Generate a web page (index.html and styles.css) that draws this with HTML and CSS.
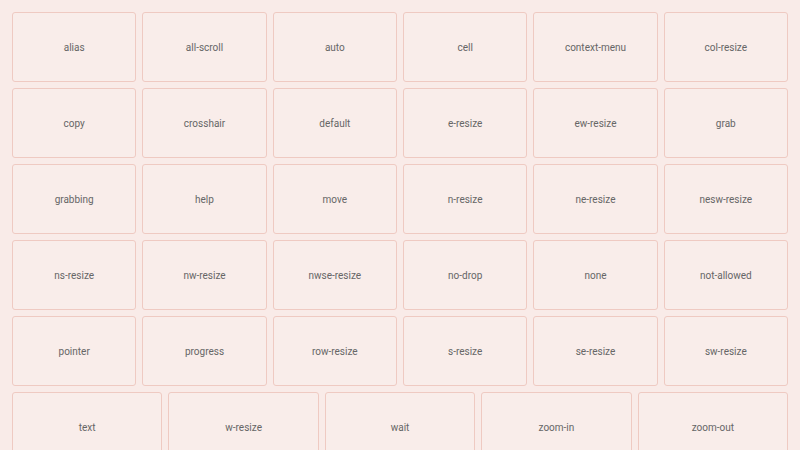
FILE: index.html
```html
<!DOCTYPE html>
<html>
<head>
<meta charset="utf-8">
<link rel="stylesheet" href="styles.css">
</head>
<body>
<div class="grid">
  <div class="cell">alias</div>
  <div class="cell">all-scroll</div>
  <div class="cell">auto</div>
  <div class="cell">cell</div>
  <div class="cell">context-menu</div>
  <div class="cell">col-resize</div>
  <div class="cell">copy</div>
  <div class="cell">crosshair</div>
  <div class="cell">default</div>
  <div class="cell">e-resize</div>
  <div class="cell">ew-resize</div>
  <div class="cell">grab</div>
  <div class="cell">grabbing</div>
  <div class="cell">help</div>
  <div class="cell">move</div>
  <div class="cell">n-resize</div>
  <div class="cell">ne-resize</div>
  <div class="cell">nesw-resize</div>
  <div class="cell">ns-resize</div>
  <div class="cell">nw-resize</div>
  <div class="cell">nwse-resize</div>
  <div class="cell">no-drop</div>
  <div class="cell">none</div>
  <div class="cell">not-allowed</div>
  <div class="cell">pointer</div>
  <div class="cell">progress</div>
  <div class="cell">row-resize</div>
  <div class="cell">s-resize</div>
  <div class="cell">se-resize</div>
  <div class="cell">sw-resize</div>
  <div class="cell">text</div>
  <div class="cell">w-resize</div>
  <div class="cell">wait</div>
  <div class="cell">zoom-in</div>
  <div class="cell">zoom-out</div>
</div>
</body>
</html>
```
FILE: styles.css
```css
html, body {
  margin: 0;
  padding: 0;
  background: #f9ebe8;
  font-family: Roboto, "Liberation Sans", sans-serif;
  overflow: hidden;
}
.grid {
  display: flex;
  flex-wrap: wrap;
  padding: 9px;
  width: 800px;
  box-sizing: border-box;
}
.cell {
  flex: 1 0 110px;
  margin: 3px;
  height: 70px;
  box-sizing: border-box;
  border: 1px solid #efcac2;
  border-radius: 3px;
  background: #f9edea;
  display: flex;
  align-items: center;
  justify-content: center;
  padding-top: 1px;
  font-size: 10px;
  color: #666;
}
```
